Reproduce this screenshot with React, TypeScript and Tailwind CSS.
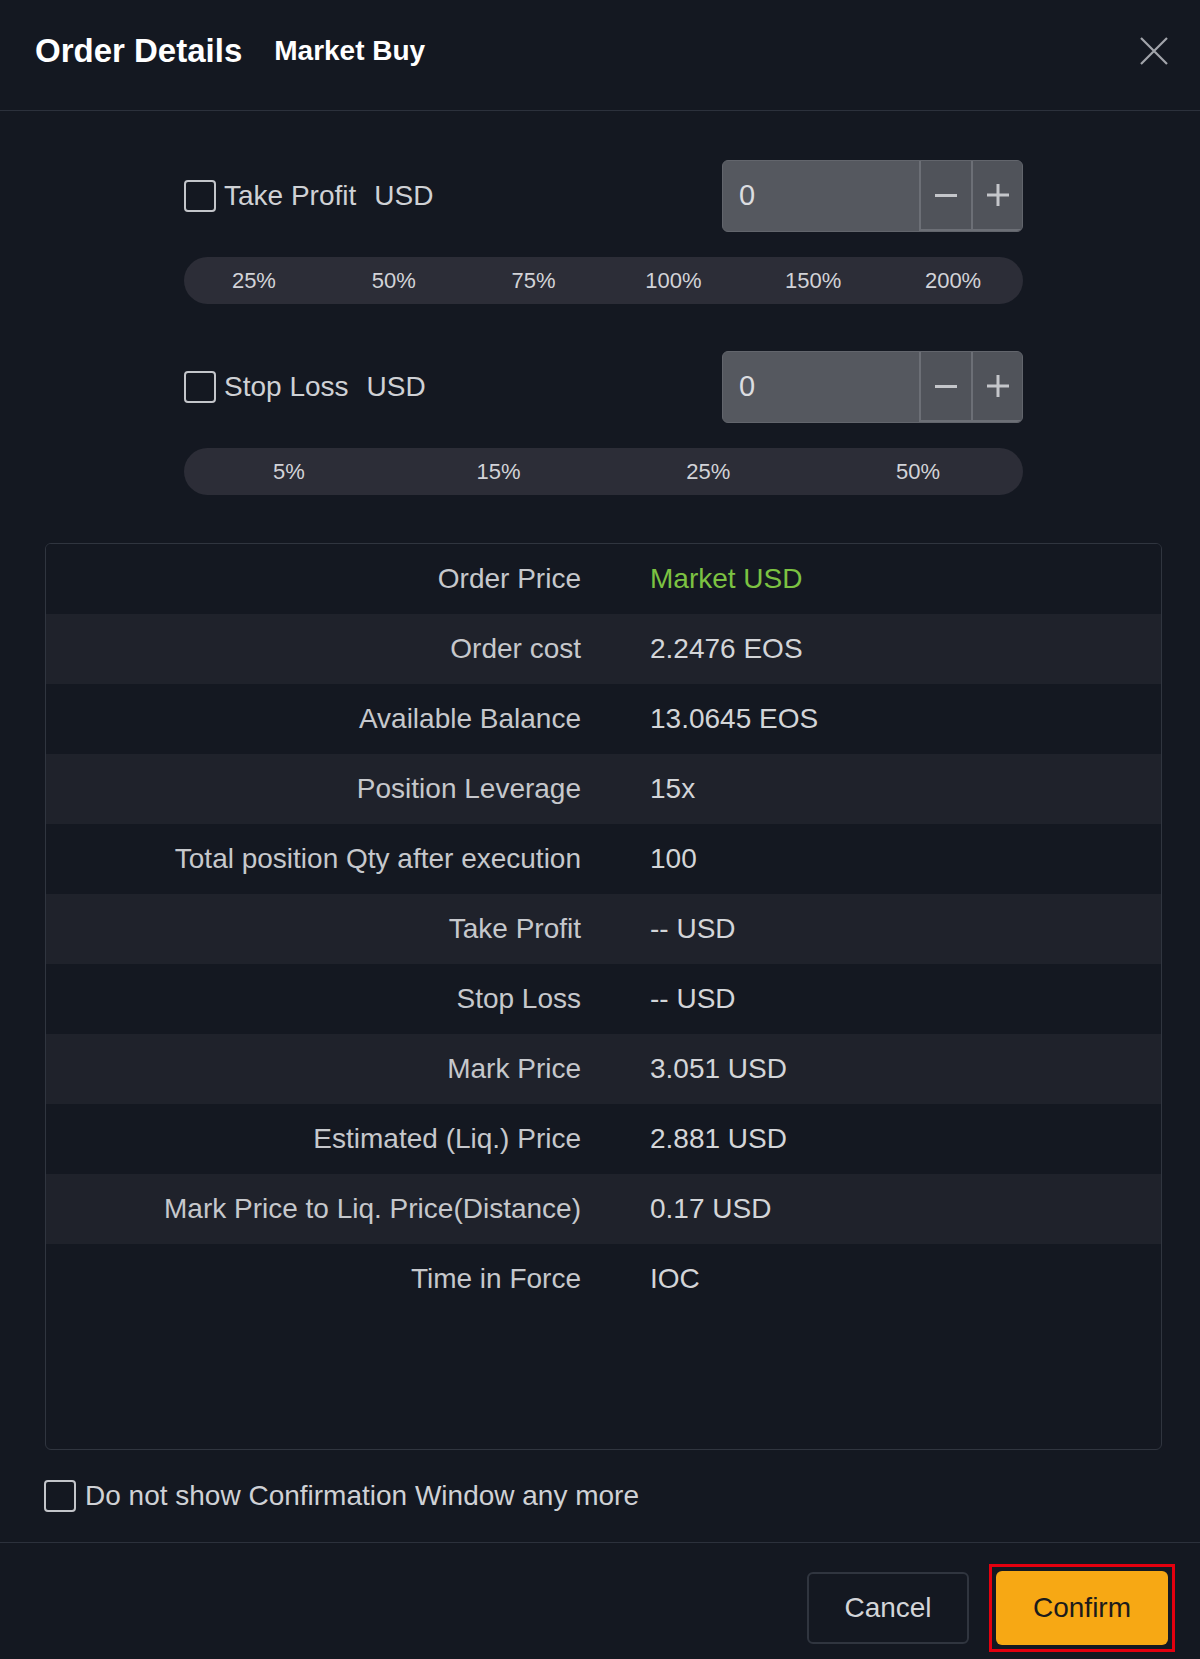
import { useState } from "react";

const FONT = "font-['Liberation_Sans',Arial,sans-serif]";

const DETAILS: { label: string; value: string; green?: boolean }[] = [
  { label: "Order Price", value: "Market USD", green: true },
  { label: "Order cost", value: "2.2476 EOS" },
  { label: "Available Balance", value: "13.0645 EOS" },
  { label: "Position Leverage", value: "15x" },
  { label: "Total position Qty after execution", value: "100" },
  { label: "Take Profit", value: "-- USD" },
  { label: "Stop Loss", value: "-- USD" },
  { label: "Mark Price", value: "3.051 USD" },
  { label: "Estimated (Liq.) Price", value: "2.881 USD" },
  { label: "Mark Price to Liq. Price(Distance)", value: "0.17 USD" },
  { label: "Time in Force", value: "IOC" },
];

function Box({ checked, onClick }: { checked: boolean; onClick: () => void }) {
  return (
    <button
      onClick={onClick}
      className={`grid h-[32px] w-[32px] shrink-0 place-items-center rounded-[4px] border-2 border-[#c3c5ca] ${
        checked ? "bg-[#f7a814]" : "bg-transparent"
      }`}
    />
  );
}

function Stepper() {
  const [val, setVal] = useState(0);
  return (
    <div className="flex h-[72px] w-[301px] overflow-hidden rounded-[6px] border border-[#62656c] bg-[#55585f]">
      <div className="flex flex-1 items-center pl-[16px] text-[29px] text-[#dcdde0]">{val}</div>
      <button
        onClick={() => setVal(val - 1)}
        className="grid w-[52px] place-items-center border-l-2 border-b-2 border-[#6c6f76] bg-[#50535a]"
      >
        <span className="block h-[3px] w-[22px] bg-[#c4c6ca]" />
      </button>
      <button
        onClick={() => setVal(val + 1)}
        className="grid w-[51px] place-items-center border-l-2 border-b-2 border-[#6c6f76] bg-[#50535a]"
      >
        <svg width="24" height="24" viewBox="0 0 24 24">
          <path d="M12 1v22M1 12h22" stroke="#c4c6ca" strokeWidth="3" />
        </svg>
      </button>
    </div>
  );
}

function PercentBar({ items }: { items: string[] }) {
  return (
    <div className="flex h-[47px] w-full items-center rounded-full bg-[#2c2d37]">
      {items.map((p) => (
        <button key={p} className="flex-1 text-center text-[22px] text-[#d2d3d8]">
          {p}
        </button>
      ))}
    </div>
  );
}

export default function App() {
  const [tp, setTp] = useState(false);
  const [sl, setSl] = useState(false);
  const [hide, setHide] = useState(false);

  return (
    <div className={`flex h-[1659px] w-[1200px] flex-col bg-[#141821] ${FONT}`}>
      {/* Header */}
      <div className="flex h-[111px] shrink-0 items-center border-b border-[#2c313c] pb-[8px] pl-[35px] pr-[31px]">
        <h2 className="text-[33px] font-bold text-white">Order Details</h2>
        <span className="ml-[32px] text-[28px] font-bold text-white">Market Buy</span>
        <button className="ml-auto" aria-label="Close">
          <svg width="30" height="28" viewBox="0 0 30 28">
            <path d="M2 1l26 26M28 1L2 27" stroke="#a2a5ab" strokeWidth="2.2" />
          </svg>
        </button>
      </div>

      {/* TP / SL */}
      <div className="flex flex-col pl-[184px] pr-[177px]">
        <div className="mt-[49px] flex h-[72px] items-center justify-between">
          <div className="flex items-center text-[28px] text-[#cfd1d5]">
            <Box checked={tp} onClick={() => setTp(!tp)} />
            <span className="ml-[8px]">Take Profit</span>
            <span className="ml-[18px]">USD</span>
          </div>
          <Stepper />
        </div>
        <div className="mt-[25px]">
          <PercentBar items={["25%", "50%", "75%", "100%", "150%", "200%"]} />
        </div>

        <div className="mt-[47px] flex h-[72px] items-center justify-between">
          <div className="flex items-center text-[28px] text-[#cfd1d5]">
            <Box checked={sl} onClick={() => setSl(!sl)} />
            <span className="ml-[8px]">Stop Loss</span>
            <span className="ml-[18px]">USD</span>
          </div>
          <Stepper />
        </div>
        <div className="mt-[25px]">
          <PercentBar items={["5%", "15%", "25%", "50%"]} />
        </div>
      </div>

      {/* Details table */}
      <div className="ml-[45px] mr-[38px] mt-[48px] h-[907px] shrink-0 overflow-hidden rounded-[6px] border border-[#30353f]">
        {DETAILS.map((d, i) => (
          <div
            key={d.label}
            className={`grid h-[70px] grid-cols-[535px_1fr] items-center text-[28px] ${
              i % 2 === 1 ? "bg-[#1f222b]" : "bg-[#141821]"
            }`}
          >
            <span className="text-right text-[#c6c8cc]">{d.label}</span>
            <span className={`pl-[69px] ${d.green ? "text-[#7cc242]" : "text-[#d3d5d8]"}`}>{d.value}</span>
          </div>
        ))}
      </div>

      {/* Don't show again */}
      <div className="flex h-[92px] shrink-0 items-center pl-[44px]">
        <Box checked={hide} onClick={() => setHide(!hide)} />
        <span className="ml-[9px] text-[28px] text-[#cfd1d5]">Do not show Confirmation Window any more</span>
      </div>

      {/* Footer */}
      <div className="flex flex-1 items-start justify-end border-t border-[#2c313c] pr-[25px] pt-[21px]">
        <button className="mt-[8px] h-[72px] w-[162px] rounded-[6px] border-2 border-[#30353f] text-[28px] text-[#d3d5d8]">
          Cancel
        </button>
        <div className="ml-[20px] border-[3px] border-[#e4000f] p-[4px]">
          <button className="h-[74px] w-[172px] rounded-[6px] bg-[#f7a814] text-[28px] text-[#1b1b1b]">
            Confirm
          </button>
        </div>
      </div>
    </div>
  );
}
